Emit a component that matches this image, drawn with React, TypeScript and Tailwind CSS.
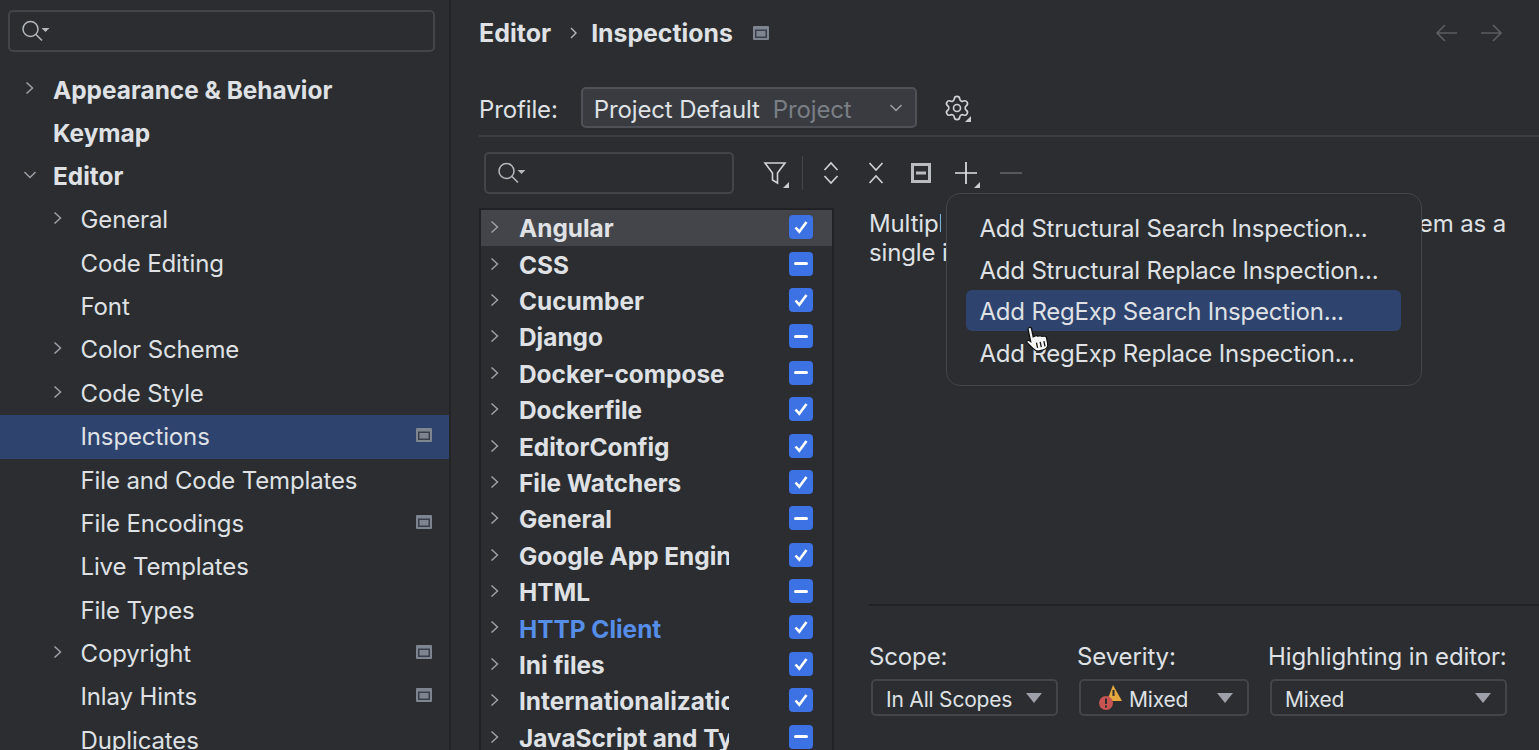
import { Settings } from "lucide-react";

const font = { fontFamily: "Inter, 'Noto Sans', sans-serif" };

function Chevron({ down = false, className = "" }: { down?: boolean; className?: string }) {
  return (
    <svg width="16" height="16" viewBox="0 0 16 16" fill="none" stroke="#9da0a8" strokeWidth="1.5" className={className}>
      {down ? <path d="M2.5 5l5.5 5.5 5.5-5.5" /> : <path d="M4.5 2.5l6 5.5-6 5.5" />}
    </svg>
  );
}

function SearchIcon() {
  return (
    <svg width="34" height="26" viewBox="0 0 34 26" fill="none">
      <circle cx="10.5" cy="11" r="7.5" stroke="#b4b8bf" strokeWidth="1.5" />
      <path d="M16 16.5l6 6" stroke="#b4b8bf" strokeWidth="1.6" />
      <path d="M21.5 10h8l-4 4z" fill="#b4b8bf" />
    </svg>
  );
}

function ProjectBadge() {
  return (
    <svg width="16" height="14" viewBox="0 0 16 14">
      <rect width="16" height="14" rx="1" fill="#7d8590" />
      <rect x="2" y="3.5" width="12" height="8.5" fill="#3a3f4a" />
      <rect x="3.5" y="5" width="9" height="5.5" fill="#7d8590" />
    </svg>
  );
}

function Corner({ className = "right-[8px] bottom-[5px]" }: { className?: string }) {
  return <span className={`absolute h-0 w-0 border-b-[6px] border-l-[6px] border-b-[#c9ccd1] border-l-transparent ${className}`} />;
}

function SideRow({ label, level = 1, arrow, bold, badge, selected }: { label: string; level?: number; arrow?: "right" | "down"; bold?: boolean; badge?: boolean; selected?: boolean }) {
  return (
    <div className={`flex h-[43.4px] shrink-0 items-center ${level === 0 ? "pl-[22px]" : "pl-[50px]"} ${selected ? "bg-[#2e436e]" : ""}`}>
      <span className={`flex shrink-0 -translate-y-[2px] ${level === 0 ? "w-[31px]" : "w-[30.5px]"}`}>{arrow && <Chevron down={arrow === "down"} />}</span>
      <span className={`text-[#dfe1e5] ${bold ? "text-[24.4px] font-bold tracking-[0px]" : ""}`}>{label}</span>
      {badge && <span className="mr-[17px] ml-auto flex -translate-y-[2px]"><ProjectBadge /></span>}
    </div>
  );
}

function TreeRow({ label, state, selected, link }: { label: string; state: "on" | "mixed"; selected?: boolean; link?: boolean }) {
  return (
    <div className={`flex h-[36.4px] shrink-0 items-center pl-[6px] ${selected ? "bg-[#43454a]" : ""}`}>
      <span className="flex w-[32px] shrink-0 -translate-y-[1px]"><Chevron /></span>
      <span className={`w-[210px] shrink-0 overflow-hidden pt-[0.8px] text-[24.4px] font-bold tracking-[0px] whitespace-nowrap ${link ? "text-[#568de8]" : "text-[#dfe1e5]"}`}>{label}</span>
      <span className="ml-[60px] flex h-[24px] w-[24px] shrink-0 -translate-y-[1px] items-center justify-center rounded-[4px] bg-[#3d72e4]">
        {state === "on" ? (
          <svg width="16" height="16" viewBox="0 0 16 16" fill="none" stroke="#fff" strokeWidth="2.6"><path d="M2.5 8.5l3.8 4.2L13.5 3" /></svg>
        ) : (
          <span className="h-[3px] w-[14px] rounded-full bg-white" />
        )}
      </span>
    </div>
  );
}

function ToolBtn({ children, corner }: { children: React.ReactNode; corner?: boolean }) {
  return <span className="relative flex h-[40px] w-[45px] shrink-0 items-center justify-center">{children}{corner && <Corner />}</span>;
}

function Dropdown({ label, icon, className }: { label: string; icon?: boolean; className: string }) {
  return (
    <div className={`flex h-[37px] items-center rounded-[5px] border-2 border-[#43454a] pr-[14px] pl-[13px] text-[21px] tracking-[-0.2px] text-[#dfe1e5] ${className}`}>
      {icon && (
        <svg width="24" height="26" viewBox="0 0 24 26" className="mr-[6px] ml-[5px] shrink-0">
          <path d="M14 0l9 16H8z" fill="#e5a83e" />
          <path d="M14.5 5v6" stroke="#2b2d30" strokeWidth="2" />
          <circle cx="7" cy="18" r="7" fill="#c75450" />
          <path d="M7 13.5v5.5M7 20.5v2" stroke="#2b2d30" strokeWidth="2" />
        </svg>
      )}
      <span className="translate-y-[2px] whitespace-nowrap">{label}</span>
      <span className="ml-auto h-0 w-0 border-x-[8px] border-t-[10px] border-x-transparent border-t-[#9da0a8]" />
    </div>
  );
}

const sideRows = [
  { label: "General", arrow: "right" as const },
  { label: "Code Editing" },
  { label: "Font" },
  { label: "Color Scheme", arrow: "right" as const },
  { label: "Code Style", arrow: "right" as const },
  { label: "Inspections", badge: true, selected: true },
  { label: "File and Code Templates" },
  { label: "File Encodings", badge: true },
  { label: "Live Templates" },
  { label: "File Types" },
  { label: "Copyright", arrow: "right" as const, badge: true },
  { label: "Inlay Hints", badge: true },
  { label: "Duplicates" },
];

const treeRows: { label: string; state: "on" | "mixed"; selected?: boolean; link?: boolean }[] = [
  { label: "Angular", state: "on", selected: true },
  { label: "CSS", state: "mixed" },
  { label: "Cucumber", state: "on" },
  { label: "Django", state: "mixed" },
  { label: "Docker-compose", state: "mixed" },
  { label: "Dockerfile", state: "on" },
  { label: "EditorConfig", state: "on" },
  { label: "File Watchers", state: "on" },
  { label: "General", state: "mixed" },
  { label: "Google App Engine", state: "on" },
  { label: "HTML", state: "mixed" },
  { label: "HTTP Client", state: "on", link: true },
  { label: "Ini files", state: "on" },
  { label: "Internationalization", state: "on" },
  { label: "JavaScript and TypeScript", state: "mixed" },
];

const menuItems = [
  "Add Structural Search Inspection...",
  "Add Structural Replace Inspection...",
  "Add RegExp Search Inspection...",
  "Add RegExp Replace Inspection...",
];

export default function App() {
  return (
    <div style={font} className="relative flex h-[750px] w-[1539px] overflow-hidden bg-[#2b2d30] text-[24px] tracking-[-0.13px] text-[#dfe1e5]">
      <aside className="flex w-[449px] shrink-0 flex-col overflow-hidden">
        <div className="mt-[10px] mr-[14px] ml-[8px] flex h-[42px] shrink-0 items-center rounded-[5px] border-2 border-[#43454a] pl-[10px]">
          <SearchIcon />
        </div>
        <div className="mt-[16.3px] flex flex-col">
          <SideRow label="Appearance & Behavior" level={0} arrow="right" bold />
          <SideRow label="Keymap" level={0} bold />
          <SideRow label="Editor" level={0} arrow="down" bold />
          {sideRows.map((r) => (
            <SideRow key={r.label} {...r} />
          ))}
        </div>
      </aside>
      <div className="w-[2px] shrink-0 bg-[#232427]" />

      <main className="flex min-w-0 flex-1 flex-col">
        <header className="flex h-[66px] shrink-0 items-center pr-[36px] pl-[28px] text-[25px] tracking-[0px]">
          <span className="translate-y-[1px] font-bold">Editor</span>
          <svg width="10" height="14" viewBox="0 0 10 14" fill="none" stroke="#b4b8bf" strokeWidth="1.4" className="mr-[12px] ml-[18px]"><path d="M2 2l5 5-5 5" /></svg>
          <span className="translate-y-[1px] text-[24.8px] font-bold">Inspections</span>
          <span className="ml-[20px] flex"><ProjectBadge /></span>
          <svg width="68" height="20" viewBox="0 0 68 20" fill="none" stroke="#5a5d63" strokeWidth="1.7" className="ml-auto">
            <path d="M22 10H2M10 2l-8 8 8 8" />
            <path d="M46 10h20M58 2l8 8-8 8" />
          </svg>
        </header>

        <div className="mt-[21px] flex h-[41px] shrink-0 items-center pl-[28px]">
          <span className="translate-y-[2px]">Profile:</span>
          <div className="ml-[23px] flex h-[41px] w-[336px] items-center rounded-[5px] border-2 border-[#4e5157] bg-[#393b40] pr-[11px] pl-[11px]">
            <span className="translate-y-[2px]">Project Default</span>
            <span className="ml-[13px] translate-y-[2px] text-[#7a7e85]">Project</span>
            <span className="ml-auto flex"><Chevron down /></span>
          </div>
          <span className="relative ml-[26px] flex h-[32px] w-[30px] items-center text-[#cfd2d7]">
            <Settings size={28} strokeWidth={1.4} />
            <Corner className="right-[2px] bottom-[2px]" />
          </span>
        </div>

        <div className="mt-[7px] ml-[28px] h-[2px] shrink-0 bg-[#3c3e43]" />

        <div className="mt-[15px] flex h-[42px] shrink-0 items-center pl-[33px]">
          <div className="flex h-[42px] w-[250px] shrink-0 items-center rounded-[5px] border-2 border-[#43454a] pl-[10px]">
            <SearchIcon />
          </div>
          <span className="ml-[18px]" />
          <ToolBtn corner>
            <svg width="24" height="26" viewBox="0 0 24 26" fill="none" stroke="#cfd2d7" strokeWidth="1.6"><path d="M2 3h20l-7.5 10v10l-5-3v-7z" /></svg>
          </ToolBtn>
          <span className="mx-[5px] h-[34px] w-[1px] shrink-0 bg-[#43454a]" />
          <ToolBtn>
            <svg width="16" height="24" viewBox="0 0 16 24" fill="none" stroke="#cfd2d7" strokeWidth="1.6"><path d="M1.5 9L8 2l6.5 7M1.5 15L8 22l6.5-7" /></svg>
          </ToolBtn>
          <ToolBtn>
            <svg width="16" height="24" viewBox="0 0 16 24" fill="none" stroke="#cfd2d7" strokeWidth="1.6"><path d="M1.5 2L8 9l6.5-7M1.5 22L8 15l6.5 7" /></svg>
          </ToolBtn>
          <ToolBtn>
            <svg width="20" height="20" viewBox="0 0 20 20" fill="none" stroke="#b9bcc1"><rect x="1.5" y="1.5" width="17" height="17" strokeWidth="3" /><path d="M5 10h10" strokeWidth="3" /></svg>
          </ToolBtn>
          <ToolBtn corner>
            <svg width="24" height="24" viewBox="0 0 24 24" fill="none" stroke="#dfe1e5" strokeWidth="1.7"><path d="M12 1v22M1 12h22" /></svg>
          </ToolBtn>
          <ToolBtn>
            <span className="h-[2px] w-[22px] bg-[#55585e]" />
          </ToolBtn>
        </div>

        <div className="mt-[14px] flex min-h-0 flex-1">
          <div className="ml-[28px] flex w-[355px] shrink-0 flex-col overflow-hidden border-x-2 border-t-2 border-[#212225]">
            {treeRows.map((r) => (
              <TreeRow key={r.label} {...r} />
            ))}
          </div>
          <div className="ml-[35px] flex min-w-0 flex-1 flex-col">
            <div className="mt-[1px] pr-[33px] leading-[29px] text-[#dfe1e5]">
              <div className="flex justify-between whitespace-nowrap">
                <span className="w-[72px] overflow-hidden">Multiple</span>
                <span>them as a</span>
              </div>
              <div>single inspection</div>
            </div>
            <div className="mt-[337px] h-[2px] shrink-0 bg-[#212225]" />
            <div className="mt-[36px] flex">
              <div className="flex w-[208px] shrink-0 flex-col gap-[7px]">
                <span className="leading-[30px]">Scope:</span>
                <Dropdown label="In All Scopes" className="ml-[2px] w-[187px]" />
              </div>
              <div className="flex w-[191px] shrink-0 flex-col gap-[7px]">
                <span className="leading-[30px]">Severity:</span>
                <Dropdown label="Mixed" icon className="ml-[2px] w-[170px]" />
              </div>
              <div className="flex w-[240px] shrink-0 flex-col gap-[7px]">
                <span className="leading-[30px] whitespace-nowrap">Highlighting in editor:</span>
                <Dropdown label="Mixed" className="ml-[2px] w-[237px]" />
              </div>
            </div>
          </div>
        </div>
      </main>

      {/* popup menu */}
      <div className="absolute top-[193px] left-[945.5px] w-[476px] rounded-[14px] border-[1.5px] border-[#43454a] bg-[#2b2d30] pt-[12.5px] pr-[20px] pb-[12px] pl-[19px] tracking-[-0.2px]">
        {menuItems.map((item, i) => (
          <div key={item} className={`flex h-[41.6px] items-center rounded-[6px] pl-[14px] ${i === 2 ? "bg-[#2e436e]" : ""}`}>
            <span className="translate-y-[1.5px]">{item}</span>
          </div>
        ))}
      </div>

      {/* hand cursor */}
      <svg width="26" height="29" viewBox="0 0 24 32" preserveAspectRatio="none" className="absolute top-[325px] left-[1025px] -rotate-[12deg]">
        <path d="M5 2.5c0-2 3.2-2 3.2 0V12l2-.5c1-.2 1.8.2 2 .8l2 .3c1-.1 1.7.3 2 1l1.7.3c1.3 0 2.1.9 2.1 2.1v6c0 4-2.5 6.5-6 6.5h-3c-3 0-4-1.5-5.5-4.5L1.5 17c-.8-1.8 1.5-3 2.7-1.500L5 16.5z" fill="#f4f4f4" stroke="#111" strokeWidth="1.2" />
        <path d="M10 19v6M13.5 19v6M17 19v6" stroke="#111" strokeWidth="1.2" />
      </svg>
    </div>
  );
}
